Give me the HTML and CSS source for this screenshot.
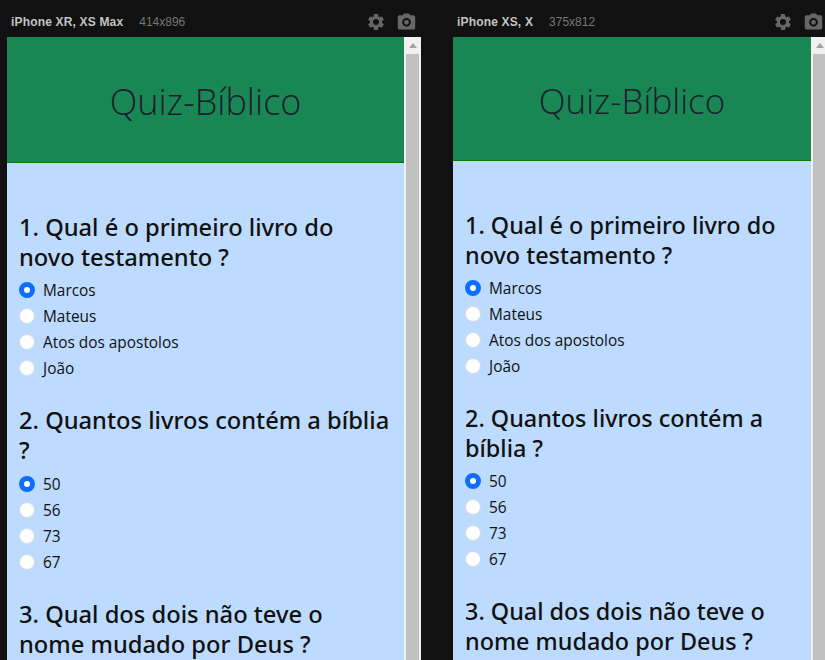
FILE: index.html
```html
<!DOCTYPE html>
<html lang="en">
<head>
    <meta charset="UTF-8">
    <title>Quiz-Bíblico</title>
    <link rel="stylesheet" href="styles.css">
</head>
<body>
    <div class="device device-xr">
        <div class="device-bar">
            <span class="device-name">iPhone XR, XS Max</span>
            <span class="device-size">414x896</span>
            <span class="device-tools">
                <svg class="icon" viewBox="0 0 24 24"><path d="M19.14 12.94c.04-.3.06-.61.06-.94s-.02-.64-.07-.94l2.03-1.58a.5.5 0 0 0 .12-.61l-1.92-3.32a.5.5 0 0 0-.59-.22l-2.39.96a7 7 0 0 0-1.62-.94l-.36-2.54a.5.5 0 0 0-.48-.41h-3.84a.5.5 0 0 0-.48.41l-.36 2.54c-.59.24-1.13.57-1.62.94l-2.39-.96a.5.5 0 0 0-.59.22L2.74 8.87a.5.5 0 0 0 .12.61l2.03 1.58c-.05.3-.09.63-.09.94s.02.64.07.94l-2.03 1.58a.5.5 0 0 0-.12.61l1.92 3.32c.12.22.37.29.59.22l2.39-.96c.5.38 1.03.7 1.62.94l.36 2.54c.05.24.24.41.48.41h3.84c.24 0 .44-.17.47-.41l.36-2.54c.59-.24 1.13-.56 1.62-.94l2.39.96c.22.08.47 0 .59-.22l1.92-3.32a.5.5 0 0 0-.12-.61zM12 15.6a3.6 3.6 0 1 1 0-7.2 3.6 3.6 0 0 1 0 7.2z"/></svg>
                <svg class="icon icon-camera" viewBox="0 0 24 24"><path d="M9 2 7.2 4H3a2 2 0 0 0-2 2v14a2 2 0 0 0 2 2h18a2 2 0 0 0 2-2V6a2 2 0 0 0-2-2h-4.2L15 2zm3 5.5a5.5 5.5 0 1 1 0 11 5.5 5.5 0 0 1 0-11zm0 2.5a3 3 0 1 0 0 6 3 3 0 0 0 0-6z"/></svg>
            </span>
        </div>
        <div class="screen">
            <div class="page">
                <header class="page-title"><h1>Quiz-Bíblico</h1></header>
                <main class="quiz">
                    <section class="question">
                        <h3>1. Qual é o primeiro livro do novo testamento ?</h3>
                        <label class="option"><input type="radio" name="xr1" checked> Marcos</label>
                        <label class="option"><input type="radio" name="xr1"> Mateus</label>
                        <label class="option"><input type="radio" name="xr1"> Atos dos apostolos</label>
                        <label class="option"><input type="radio" name="xr1"> João</label>
                    </section>
                    <section class="question">
                        <h3>2. Quantos livros contém a bíblia ?</h3>
                        <label class="option"><input type="radio" name="xr2" checked> 50</label>
                        <label class="option"><input type="radio" name="xr2"> 56</label>
                        <label class="option"><input type="radio" name="xr2"> 73</label>
                        <label class="option"><input type="radio" name="xr2"> 67</label>
                    </section>
                    <section class="question">
                        <h3>3. Qual dos dois não teve o nome mudado por Deus ?</h3>
                    </section>
                </main>
            </div>
            <div class="scrollbar"><span class="scroll-up"></span><span class="scroll-thumb"></span></div>
        </div>
    </div>

    <div class="device device-x">
        <div class="device-bar">
            <span class="device-name">iPhone XS, X</span>
            <span class="device-size">375x812</span>
            <span class="device-tools">
                <svg class="icon" viewBox="0 0 24 24"><path d="M19.14 12.94c.04-.3.06-.61.06-.94s-.02-.64-.07-.94l2.03-1.58a.5.5 0 0 0 .12-.61l-1.92-3.32a.5.5 0 0 0-.59-.22l-2.39.96a7 7 0 0 0-1.62-.94l-.36-2.54a.5.5 0 0 0-.48-.41h-3.84a.5.5 0 0 0-.48.41l-.36 2.54c-.59.24-1.13.57-1.62.94l-2.39-.96a.5.5 0 0 0-.59.22L2.74 8.87a.5.5 0 0 0 .12.61l2.03 1.58c-.05.3-.09.63-.09.94s.02.64.07.94l-2.03 1.58a.5.5 0 0 0-.12.61l1.92 3.32c.12.22.37.29.59.22l2.39-.96c.5.38 1.03.7 1.62.94l.36 2.54c.05.24.24.41.48.41h3.84c.24 0 .44-.17.47-.41l.36-2.54c.59-.24 1.13-.56 1.62-.94l2.39.96c.22.08.47 0 .59-.22l1.92-3.32a.5.5 0 0 0-.12-.61zM12 15.6a3.6 3.6 0 1 1 0-7.2 3.6 3.6 0 0 1 0 7.2z"/></svg>
                <svg class="icon icon-camera" viewBox="0 0 24 24"><path d="M9 2 7.2 4H3a2 2 0 0 0-2 2v14a2 2 0 0 0 2 2h18a2 2 0 0 0 2-2V6a2 2 0 0 0-2-2h-4.2L15 2zm3 5.5a5.5 5.5 0 1 1 0 11 5.5 5.5 0 0 1 0-11zm0 2.5a3 3 0 1 0 0 6 3 3 0 0 0 0-6z"/></svg>
            </span>
        </div>
        <div class="screen">
            <div class="page">
                <header class="page-title"><h1>Quiz-Bíblico</h1></header>
                <main class="quiz">
                    <section class="question">
                        <h3>1. Qual é o primeiro livro do novo testamento ?</h3>
                        <label class="option"><input type="radio" name="x1" checked> Marcos</label>
                        <label class="option"><input type="radio" name="x1"> Mateus</label>
                        <label class="option"><input type="radio" name="x1"> Atos dos apostolos</label>
                        <label class="option"><input type="radio" name="x1"> João</label>
                    </section>
                    <section class="question">
                        <h3>2. Quantos livros contém a bíblia ?</h3>
                        <label class="option"><input type="radio" name="x2" checked> 50</label>
                        <label class="option"><input type="radio" name="x2"> 56</label>
                        <label class="option"><input type="radio" name="x2"> 73</label>
                        <label class="option"><input type="radio" name="x2"> 67</label>
                    </section>
                    <section class="question">
                        <h3>3. Qual dos dois não teve o nome mudado por Deus ?</h3>
                    </section>
                </main>
            </div>
            <div class="scrollbar"><span class="scroll-up"></span><span class="scroll-thumb"></span></div>
        </div>
    </div>
</body>
</html>
```

FILE: styles.css
```css
html, body {
    height: 100%;
}
body {
    margin: 0;
    padding-left: 7px;
    display: flex;
    gap: 32px;
    height: 660px;
    overflow: hidden;
    background-color: #111;
    font-family: "Open Sans", sans-serif;
    color: #111;
}
.device {
    flex: none;
    display: flex;
    flex-direction: column;
}
.device-xr {
    width: 414px;
}
.device-x {
    width: 375px;
}
.device-bar {
    height: 37px;
    flex: none;
    display: flex;
    align-items: center;
    padding: 6px 0 0 4px;
    box-sizing: border-box;
    font-family: "Liberation Sans", Arial, sans-serif;
    font-size: 12px;
}
.device-name {
    font-weight: bold;
    letter-spacing: 0.17px;
    color: #c4c4c4;
}
.device-size {
    margin-left: 16px;
    color: #777;
}
.device-tools {
    margin-left: auto;
    margin-right: 5px;
    display: flex;
    align-items: center;
    gap: 11px;
}
.icon {
    width: 20px;
    height: 20px;
    fill: #666;
}
.icon-camera {
    width: 19px;
    height: 19px;
}
.screen {
    flex: 1;
    display: flex;
    min-height: 0;
    overflow: hidden;
    background: #bddbfe;
}
.page {
    flex: 1;
    min-width: 0;
}
.page-title {
    background-color: #198754;
    border-bottom: 1px solid #008000;
    display: flex;
    align-items: center;
    justify-content: center;
}
.page-title h1 {
    margin: 0;
    padding-top: 3px;
    font-weight: 300;
    color: #1c1c2c;
}
.device-xr .page-title {
    height: 125px;
}
.device-xr .page-title h1 {
    font-size: 36px;
}
.device-x .page-title {
    height: 123px;
}
.device-x .page-title h1 {
    font-size: 35px;
}
.quiz {
    padding: 49px 12px 0;
}
.question {
    margin-bottom: 24px;
}
.question h3 {
    margin: 0 0 5.4px;
    font-family: "Noto Sans", sans-serif;
    font-size: 23.7px;
    line-height: 30px;
    font-weight: 500;
}
.device-x .question h3 {
    margin-bottom: 5px;
    font-size: 23.4px;
}
.option {
    display: flex;
    align-items: center;
    gap: 8px;
    box-sizing: border-box;
    height: 26px;
    padding-top: 2px;
    line-height: 24px;
    font-size: 15.4px;
}
.option input {
    appearance: none;
    box-sizing: border-box;
    width: 16px;
    height: 16px;
    margin: 0 0 2px;
    background: #fff;
    border: 1px solid #d5dde6;
    border-radius: 50%;
}
.option input:checked {
    border: 5px solid #0d6efd;
}
.scrollbar {
    flex: none;
    width: 17px;
    display: flex;
    flex-direction: column;
    align-items: center;
    background: #f1f1f1;
}
.scroll-up {
    flex: none;
    width: 0;
    height: 0;
    margin: 6px 0 6px;
    border-left: 4px solid transparent;
    border-right: 4px solid transparent;
    border-bottom: 5px solid #a3a3a3;
}
.scroll-thumb {
    flex: 1;
    width: 13px;
    background: #c1c1c1;
}
```
